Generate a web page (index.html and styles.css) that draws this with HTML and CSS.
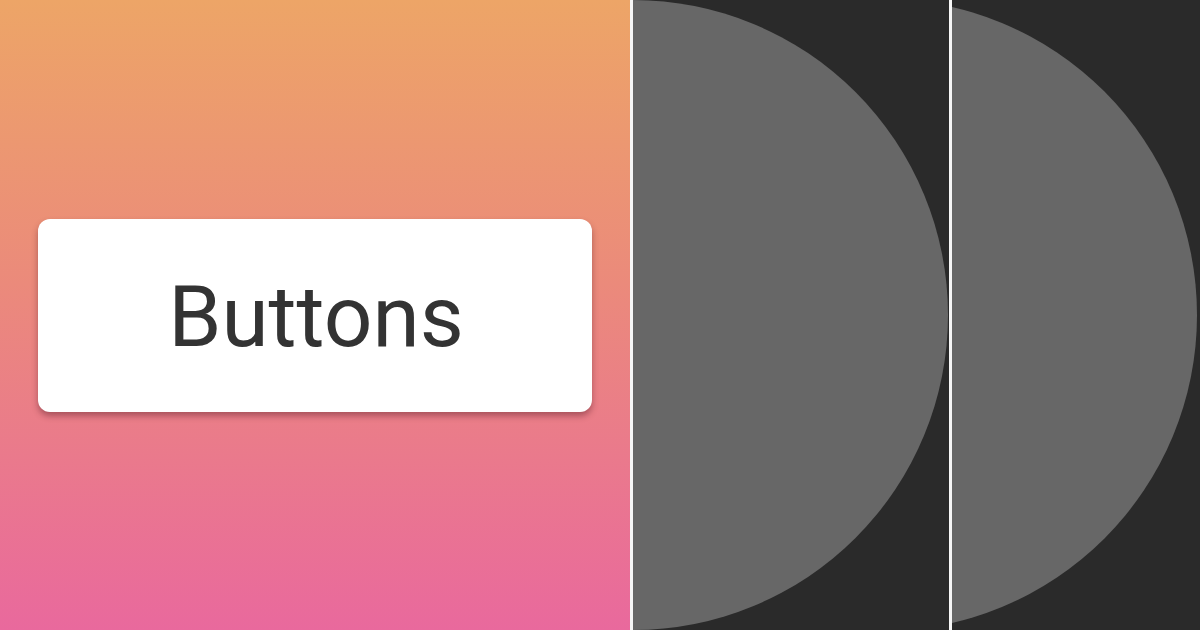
FILE: index.html
```html
<!DOCTYPE html>
<html>
<head>
<meta charset="utf-8">
<link rel="stylesheet" href="styles.css">
</head>
<body>
<div class="frame">
  <section class="hero">
    <div class="card"><span class="label">Buttons</span></div>
  </section>
  <div class="sep"></div>
  <section class="panel panel-a"><div class="disc disc-a"></div></section>
  <div class="sep"></div>
  <section class="panel panel-b"><div class="disc disc-b"></div></section>
</div>
</body>
</html>
```
FILE: styles.css
```css
html, body {
  margin: 0;
  padding: 0;
  width: 1200px;
  height: 630px;
  overflow: hidden;
  background: #2a2a2a;
}
.frame {
  display: flex;
  width: 1200px;
  height: 630px;
}
.hero {
  width: 630px;
  flex: none;
  height: 630px;
  background: linear-gradient(to bottom, #eda567 0%, #eb8a7b 45%, #e9699d 100%);
  display: flex;
  align-items: center;
  justify-content: center;
}
.card {
  width: 554px;
  height: 193px;
  background: #ffffff;
  border-radius: 12px;
  box-shadow: 0 4px 6px rgba(90, 30, 40, 0.45);
  display: flex;
  align-items: center;
  justify-content: center;
}
.label {
  font-family: Roboto, "Liberation Sans", sans-serif;
  font-size: 85.5px;
  color: #333333;
  line-height: 1;
  margin-top: 6px;
  margin-left: 2px;
}
.sep {
  width: 3px;
  flex: none;
  background: #f6f6f6;
}
.panel {
  height: 630px;
  background: #2a2a2a;
  display: flex;
  align-items: center;
  overflow: hidden;
}
.panel-a { width: 316px; flex: none; }
.panel-b { flex: 1; }
.disc {
  flex: none;
  background: #676767;
  border-radius: 50%;
}
.disc-a {
  width: 630px;
  height: 630px;
  margin-left: -315px;
}
.disc-b {
  width: 632px;
  height: 632px;
  margin-left: -387px;
}
```
